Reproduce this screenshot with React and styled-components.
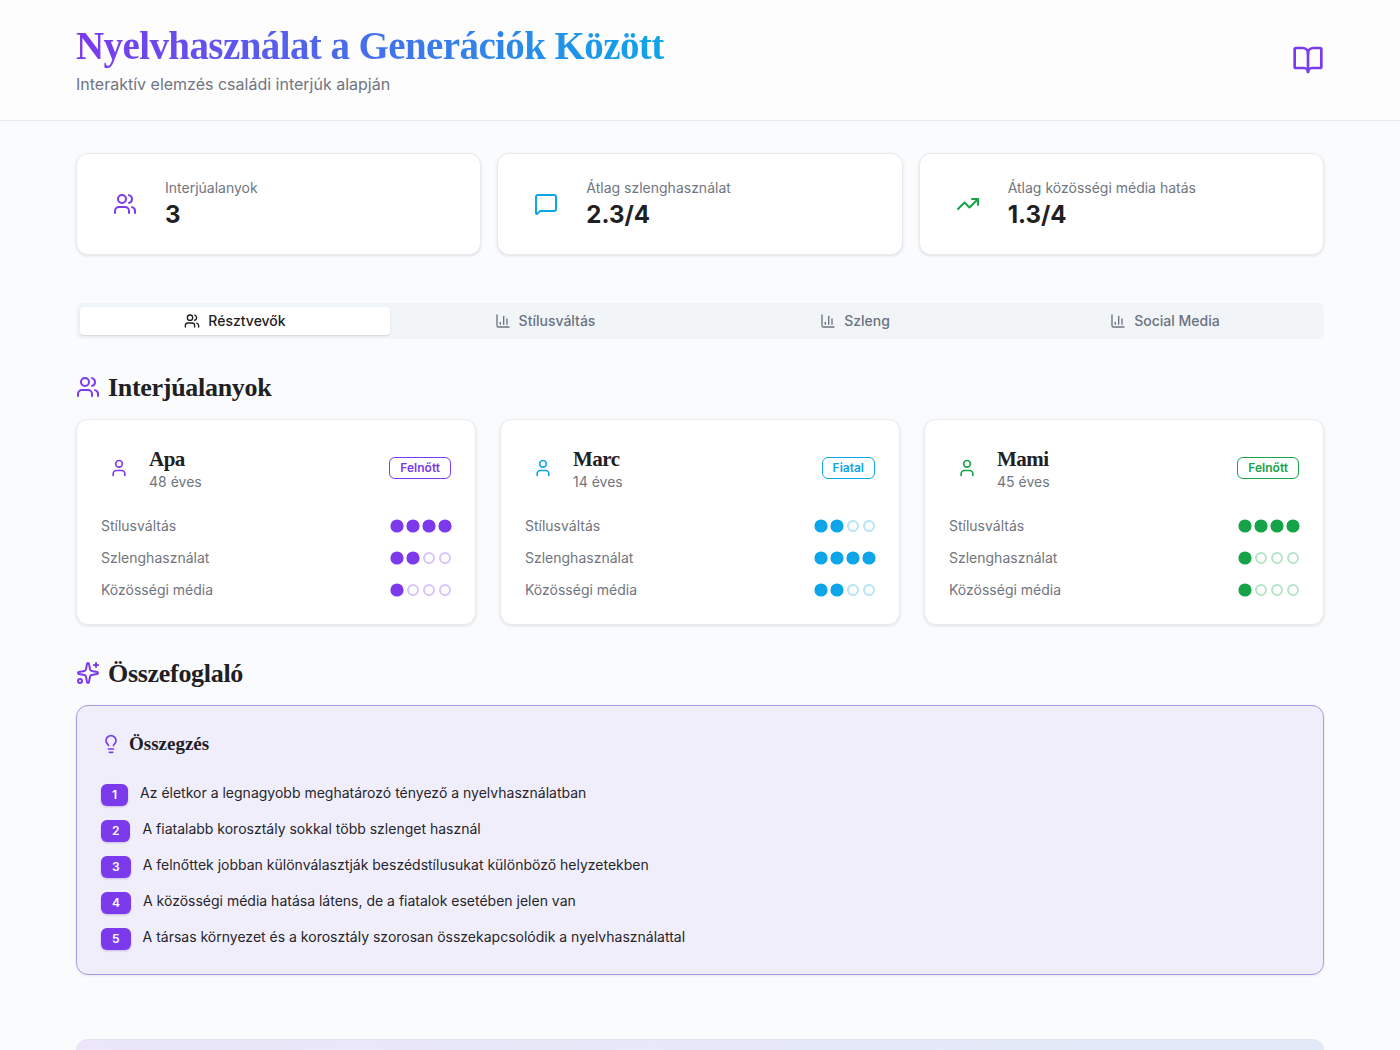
import React from "react";
import styled, { createGlobalStyle } from "styled-components";
import {
  BookOpen,
  ChartColumn,
  Lightbulb,
  MessageSquare,
  Sparkles,
  TrendingUp,
  User,
  Users,
} from "lucide-react";

const PURPLE = "#7c3aed";
const BLUE = "#0ea5e9";
const GREEN = "#16a34a";

const GlobalStyle = createGlobalStyle`
  * {
    box-sizing: border-box;
  }
  body {
    margin: 0;
    background: #fafbfd;
    color: #1f2024;
    font-family: Inter, "Liberation Sans", sans-serif;
    line-height: 1.6;
  }
`;

const Header = styled.header`
  height: 121px;
  padding: 0 76px;
  display: flex;
  justify-content: space-between;
  align-items: center;
  background: #fdfdfe;
  border-bottom: 1px solid #e7e9ee;
`;

const PageTitle = styled.h1`
  margin: 0;
  font-family: "Liberation Serif", serif;
  font-size: 39px;
  font-weight: 700;
  line-height: 44px;
  letter-spacing: -0.59px;
  background: linear-gradient(90deg, ${PURPLE}, ${BLUE});
  -webkit-background-clip: text;
  background-clip: text;
  color: transparent;
`;

const PageSub = styled.p`
  margin: 4px 0 0;
  font-size: 16px;
  line-height: 24px;
  color: #71757e;
`;

const Main = styled.main`
  padding: 32px 76px 0;
`;

const StatGrid = styled.div`
  display: grid;
  grid-template-columns: repeat(3, 1fr);
  gap: 16px;
`;

const Card = styled.div`
  background: #fff;
  border: 1px solid #e9ebef;
  border-radius: 12px;
  box-shadow: 0 1px 3px rgba(15, 23, 42, 0.12);
`;

const StatCard = styled(Card)`
  height: 102px;
  padding: 0 24px;
  display: flex;
  align-items: center;
  gap: 16px;
`;

const IconBox = styled.div`
  width: 48px;
  height: 48px;
  display: flex;
  align-items: center;
  justify-content: center;
  color: ${(p) => p.$color};
`;

const StatLabel = styled.div`
  font-size: 14px;
  line-height: 20px;
  color: #71757e;
`;

const StatValue = styled.div`
  margin-bottom: -2px;
  font-size: 24px;
  line-height: 34px;
  font-weight: 700;
`;

const Tabs = styled.div`
  margin-top: 48px;
  height: 36px;
  padding: 4px;
  display: grid;
  grid-template-columns: repeat(4, 1fr);
  background: #f2f5f8;
  border-radius: 6px;
`;

const Tab = styled.div`
  display: flex;
  align-items: center;
  justify-content: center;
  gap: 8px;
  font-size: 14px;
  font-weight: 500;
  border-radius: 4px;
  color: ${(p) => (p.$active ? "#1f2024" : "#6b7280")};
  background: ${(p) => (p.$active ? "#fff" : "transparent")};
  box-shadow: ${(p) => (p.$active ? "0 1px 2px rgba(15, 23, 42, 0.14)" : "none")};
`;

const SectionTitle = styled.h2`
  margin: 32px 0 16px;
  display: flex;
  align-items: center;
  gap: 8px;
  font-family: "Liberation Serif", serif;
  font-size: 26px;
  font-weight: 700;
  letter-spacing: -0.3px;
  svg {
    color: ${PURPLE};
  }
`;

const SectionLabel = styled.span`
  padding-top: 2px;
  line-height: 30px;
`;

const PeopleGrid = styled.div`
  display: grid;
  grid-template-columns: repeat(3, 1fr);
  gap: 24px;
`;

const PersonCard = styled(Card)`
  height: 206px;
  padding: 24px;
`;

const PersonHead = styled.div`
  display: flex;
  align-items: center;
  gap: 12px;
  margin-bottom: 18px;
`;

const PersonIcon = styled.div`
  width: 36px;
  height: 36px;
  display: flex;
  align-items: center;
  justify-content: center;
  color: ${(p) => p.$color};
`;

const PersonName = styled.div`
  padding-top: 2px;
  font-family: "Liberation Serif", serif;
  font-size: 21px;
  font-weight: 700;
  line-height: 26px;
  letter-spacing: -0.5px;
`;

const PersonAge = styled.div`
  font-size: 14px;
  line-height: 20px;
  color: #71757e;
`;

const Badge = styled.span`
  margin-left: auto;
  height: 22px;
  padding: 0 10px;
  display: flex;
  align-items: center;
  font-size: 12px;
  font-weight: 600;
  border-radius: 6px;
  background: #fff;
  color: ${(p) => p.$color};
  border: 1px solid ${(p) => p.$color};
`;

const MetricRow = styled.div`
  height: 32px;
  display: flex;
  align-items: center;
  justify-content: space-between;
  font-size: 14px;
  color: #71757e;
`;

const Dots = styled.div`
  display: flex;
  gap: 4px;
`;

const Dot = styled.span`
  width: 12px;
  height: 12px;
  border-radius: 50%;
  border: 2px solid ${(p) => p.$color};
  background: ${(p) => (p.$on ? p.$color : "transparent")};
  opacity: ${(p) => (p.$on ? 1 : 0.3)};
  transform: ${(p) => (p.$on ? "scale(1.1)" : "none")};
`;

const SummaryBox = styled.section`
  height: 270px;
  padding: 24px;
  background: #f1eefc;
  border: 1px solid #a79be0;
  border-radius: 12px;
  box-shadow: 0 1px 3px rgba(15, 23, 42, 0.08);
`;

const SummaryHead = styled.h3`
  margin: 0 0 24px;
  height: 28px;
  display: flex;
  align-items: center;
  gap: 8px;
  font-family: "Liberation Serif", serif;
  font-size: 19px;
  font-weight: 700;
  line-height: 28px;
  svg {
    color: ${PURPLE};
  }
`;

const SummaryList = styled.ul`
  margin: 0;
  padding: 0;
  list-style: none;
  display: flex;
  flex-direction: column;
  gap: 12px;
`;

const SummaryItem = styled.li`
  display: flex;
  align-items: flex-start;
  gap: 12px;
  font-size: 14px;
  line-height: 22px;
  height: 24px;
  color: #25262b;
`;

const NumberBadge = styled.span`
  margin-top: 2px;
  height: 22px;
  padding: 0 11px;
  display: flex;
  align-items: center;
  font-size: 12px;
  font-weight: 600;
  color: #fff;
  background: ${PURPLE};
  border-radius: 6px;
  box-shadow: 0 1px 2px rgba(76, 29, 149, 0.25);
`;

const NextBox = styled.div`
  margin-top: 64px;
  height: 60px;
  border-top: 1px solid #e2e2ee;
  border-radius: 12px;
  background: linear-gradient(90deg, #ebe6f9, #e2eaf8);
`;

const stats = [
  { icon: Users, color: PURPLE, label: "Interjúalanyok", value: "3" },
  { icon: MessageSquare, color: BLUE, label: "Átlag szlenghasználat", value: "2.3/4" },
  { icon: TrendingUp, color: GREEN, label: "Átlag közösségi média hatás", value: "1.3/4" },
];

const tabs = [
  { icon: Users, label: "Résztvevők", active: true },
  { icon: ChartColumn, label: "Stílusváltás" },
  { icon: ChartColumn, label: "Szleng" },
  { icon: ChartColumn, label: "Social Media" },
];

const people = [
  { name: "Apa", age: "48 éves", badge: "Felnőtt", color: PURPLE, scores: [4, 2, 1] },
  { name: "Marc", age: "14 éves", badge: "Fiatal", color: BLUE, scores: [2, 4, 2] },
  { name: "Mami", age: "45 éves", badge: "Felnőtt", color: GREEN, scores: [4, 1, 1] },
];

const metrics = ["Stílusváltás", "Szlenghasználat", "Közösségi média"];

const findings = [
  "Az életkor a legnagyobb meghatározó tényező a nyelvhasználatban",
  "A fiatalabb korosztály sokkal több szlenget használ",
  "A felnőttek jobban különválasztják beszédstílusukat különböző helyzetekben",
  "A közösségi média hatása látens, de a fiatalok esetében jelen van",
  "A társas környezet és a korosztály szorosan összekapcsolódik a nyelvhasználattal",
];

const App = () => (
  <>
    <GlobalStyle />
    <Header>
      <div>
        <PageTitle>Nyelvhasználat a Generációk Között</PageTitle>
        <PageSub>Interaktív elemzés családi interjúk alapján</PageSub>
      </div>
      <BookOpen size={32} color={PURPLE} />
    </Header>
    <Main>
      <StatGrid>
        {stats.map((s) => (
          <StatCard key={s.label}>
            <IconBox $color={s.color}>
              <s.icon size={24} />
            </IconBox>
            <div>
              <StatLabel>{s.label}</StatLabel>
              <StatValue>{s.value}</StatValue>
            </div>
          </StatCard>
        ))}
      </StatGrid>

      <Tabs>
        {tabs.map((t) => (
          <Tab key={t.label} $active={t.active}>
            <t.icon size={16} />
            {t.label}
          </Tab>
        ))}
      </Tabs>

      <SectionTitle>
        <Users size={24} />
        <SectionLabel>Interjúalanyok</SectionLabel>
      </SectionTitle>
      <PeopleGrid>
        {people.map((p) => (
          <PersonCard key={p.name}>
            <PersonHead>
              <PersonIcon $color={p.color}>
                <User size={20} />
              </PersonIcon>
              <div>
                <PersonName>{p.name}</PersonName>
                <PersonAge>{p.age}</PersonAge>
              </div>
              <Badge $color={p.color}>{p.badge}</Badge>
            </PersonHead>
            {metrics.map((m, i) => (
              <MetricRow key={m}>
                {m}
                <Dots>
                  {[1, 2, 3, 4].map((n) => (
                    <Dot key={n} $color={p.color} $on={n <= p.scores[i]} />
                  ))}
                </Dots>
              </MetricRow>
            ))}
          </PersonCard>
        ))}
      </PeopleGrid>

      <SectionTitle>
        <Sparkles size={24} />
        <SectionLabel>Összefoglaló</SectionLabel>
      </SectionTitle>
      <SummaryBox>
        <SummaryHead>
          <Lightbulb size={20} />
          Összegzés
        </SummaryHead>
        <SummaryList>
          {findings.map((f, i) => (
            <SummaryItem key={f}>
              <NumberBadge>{i + 1}</NumberBadge>
              {f}
            </SummaryItem>
          ))}
        </SummaryList>
      </SummaryBox>
      <NextBox />
    </Main>
  </>
);

export default App;
